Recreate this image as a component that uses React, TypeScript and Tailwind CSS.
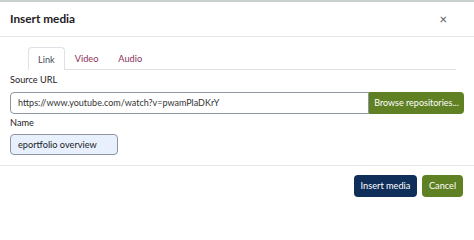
import React from "react";

export default function App() {
  return (
    <div
      className="w-[474px] h-[205px] bg-white border-t-2 border-[#c9d0d0] flex flex-col text-[#1d2125]"
      style={{ fontFamily: 'Lato, "Noto Sans", sans-serif' }}
    >
      <div className="h-[35px] flex items-center justify-between pl-[10px] pr-[27px] border-b border-[#e6e6e6]">
        <h1 className="text-[11.8px] font-bold leading-none">Insert media</h1>
        <span className="text-[13px] leading-none text-[#555]">×</span>
      </div>
      <div className="px-[10px] pt-[10px] flex flex-col">
        <div className="flex ml-[18px] mr-[8px] border-b border-[#dee2e6] h-[23px] text-[9.2px]">
          <div className="px-[9px] pt-[2px] flex items-center border border-b-0 border-[#dee2e6] rounded-t-[4px] bg-white -mb-px text-[#495057]">Link</div>
          <div className="px-[10px] pt-[2px] flex items-center text-[#8c2f5a]">Video</div>
          <div className="px-[10px] pt-[2px] flex items-center text-[#8c2f5a]">Audio</div>
        </div>
        <label className="text-[9.2px] mt-[2px] leading-[16px]">Source URL</label>
        <div className="flex mt-[4px] h-[22px]">
          <div className="flex-1 border border-[#8f959e] rounded-l-[4px] flex items-center px-[7px] text-[9px] text-[#333]">
            https://www.youtube.com/watch?v=pwamPlaDKrY
          </div>
          <button className="w-[95px] bg-[#5f8023] text-white text-[9px] rounded-r-[4px] flex items-center justify-center whitespace-nowrap">
            Browse repositories...
          </button>
        </div>
        <label className="text-[9.2px] mt-[1px] leading-[16px]">Name</label>
        <div className="mt-[3px] w-[108px] h-[21px] border border-[#8f959e] rounded-[4px] bg-[#e8f0fe] flex items-center px-[7px] text-[9.2px] text-[#222]">
          eportfolio overview
        </div>
      </div>
      <div className="mt-[10px] border-t border-[#e6e6e6] flex justify-end gap-[5px] pr-[11px] pt-[9px]">
        <button className="w-[63px] h-[22px] bg-[#0f2e5a] text-white text-[9.2px] rounded-[4px] whitespace-nowrap">Insert media</button>
        <button className="w-[41px] h-[22px] bg-[#5f8023] text-white text-[9.2px] rounded-[4px]">Cancel</button>
      </div>
    </div>
  );
}
